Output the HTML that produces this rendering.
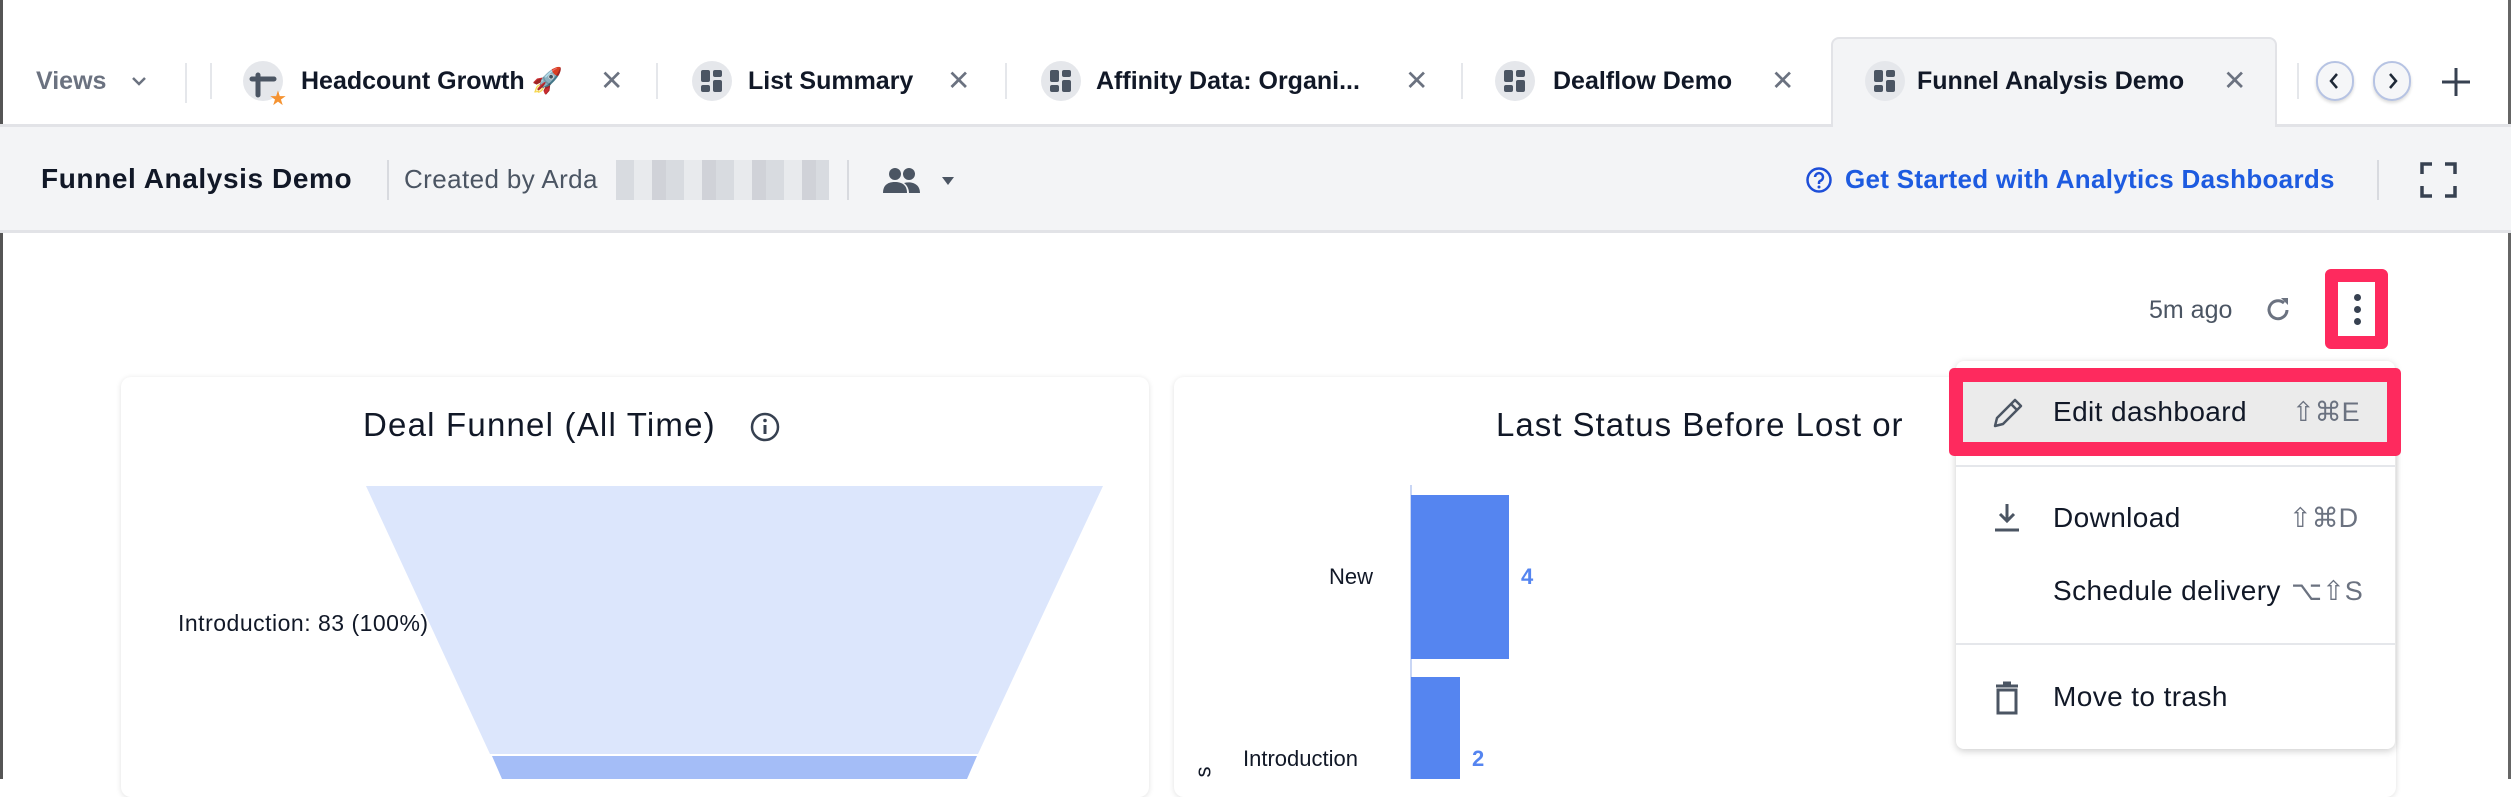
<!DOCTYPE html>
<html><head><meta charset="utf-8"><style>
*{margin:0;padding:0;box-sizing:border-box}
body{width:2511px;height:779px;overflow:hidden;background:#fff;font-family:"Liberation Sans",sans-serif;position:relative;color:#111827}
.a{position:absolute;white-space:nowrap}
.tab{font-size:25px;font-weight:bold;color:#111827;top:64px;line-height:34px}
.ic{position:absolute;top:61px;width:40px;height:40px;border-radius:20px;background:#e5e7eb}
.x{position:absolute;top:64px;font-size:28px;color:#6b7280;line-height:34px}
.sep{position:absolute;width:2px;background:#e5e7eb}
.mi{font-size:28px;color:#111827;line-height:34px;letter-spacing:.4px}
.sc{font-size:27px;color:#6b7280;line-height:34px}
</style></head><body>
<div class="a" style="left:0;top:0;width:3px;height:779px;background:#555"></div>
<div class="a" style="right:0;top:0;width:3px;height:779px;background:#666"></div>
<!-- tab bar -->
<div class="a" style="left:0;top:124px;width:2511px;height:3px;background:#e2e3e7"></div>
<div class="a tab" style="left:36px;color:#6b7280;font-weight:bold">Views</div>
<svg class="a" style="left:130px;top:74px" width="18" height="14" viewBox="0 0 18 14"><path d="M3 4l6 6 6-6" stroke="#6b7280" stroke-width="2.5" fill="none"/></svg>
<div class="sep" style="left:185px;top:63px;height:40px"></div>
<div class="sep" style="left:210px;top:63px;height:36px"></div>
<div class="ic" style="left:243px"></div>
<svg class="a" style="left:249px;top:68px" width="30" height="30" viewBox="0 0 30 30"><path d="M3 11h22M9 7v20" stroke="#4b5563" stroke-width="5" stroke-linecap="round"/></svg>
<div class="a" style="left:269px;top:86px;font-size:20px;color:#f59331">★</div>
<div class="a tab" style="left:301px">Headcount Growth 🚀</div>
<div class="x" style="left:600px">✕</div>
<div class="sep" style="left:656px;top:63px;height:36px"></div>
<div class="ic" style="left:692px"></div>
<svg class="a" style="left:700px;top:69px" width="24" height="24" viewBox="0 0 24 24"><rect x="1" y="1" width="9" height="12" rx="2" fill="#4b5563"/><rect x="13" y="1" width="9" height="7" rx="2" fill="#4b5563"/><rect x="1" y="16" width="9" height="7" rx="2" fill="#4b5563"/><rect x="13" y="11" width="9" height="12" rx="2" fill="#4b5563"/></svg>
<div class="a tab" style="left:748px">List Summary</div>
<div class="x" style="left:947px">✕</div>
<div class="sep" style="left:1005px;top:63px;height:36px"></div>
<div class="ic" style="left:1041px"></div>
<svg class="a" style="left:1049px;top:69px" width="24" height="24" viewBox="0 0 24 24"><rect x="1" y="1" width="9" height="12" rx="2" fill="#4b5563"/><rect x="13" y="1" width="9" height="7" rx="2" fill="#4b5563"/><rect x="1" y="16" width="9" height="7" rx="2" fill="#4b5563"/><rect x="13" y="11" width="9" height="12" rx="2" fill="#4b5563"/></svg>
<div class="a tab" style="left:1096px">Affinity Data: Organi...</div>
<div class="x" style="left:1405px">✕</div>
<div class="sep" style="left:1461px;top:63px;height:36px"></div>
<div class="ic" style="left:1495px"></div>
<svg class="a" style="left:1503px;top:69px" width="24" height="24" viewBox="0 0 24 24"><rect x="1" y="1" width="9" height="12" rx="2" fill="#4b5563"/><rect x="13" y="1" width="9" height="7" rx="2" fill="#4b5563"/><rect x="1" y="16" width="9" height="7" rx="2" fill="#4b5563"/><rect x="13" y="11" width="9" height="12" rx="2" fill="#4b5563"/></svg>
<div class="a tab" style="left:1553px">Dealflow Demo</div>
<div class="x" style="left:1771px">✕</div>
<div class="a" style="left:1831px;top:37px;width:446px;height:91px;background:#f3f4f6;border:2px solid #e2e3e7;border-bottom:none;border-radius:8px 8px 0 0"></div>
<div class="ic" style="left:1865px"></div>
<svg class="a" style="left:1873px;top:69px" width="24" height="24" viewBox="0 0 24 24"><rect x="1" y="1" width="9" height="12" rx="2" fill="#4b5563"/><rect x="13" y="1" width="9" height="7" rx="2" fill="#4b5563"/><rect x="1" y="16" width="9" height="7" rx="2" fill="#4b5563"/><rect x="13" y="11" width="9" height="12" rx="2" fill="#4b5563"/></svg>
<div class="a tab" style="left:1917px">Funnel Analysis Demo</div>
<div class="x" style="left:2223px">✕</div>
<div class="sep" style="left:2297px;top:63px;height:36px"></div>
<div class="a" style="left:2316px;top:61px;width:38px;height:40px;border-radius:20px;border:2px solid #b6c3e3;background:#f5f6f8;box-shadow:0 2px 3px rgba(0,0,0,.15)"></div>
<svg class="a" style="left:2326px;top:71px" width="18" height="20" viewBox="0 0 18 20"><path d="M11 3l-6 7 6 7" stroke="#1f2937" stroke-width="2.5" fill="none"/></svg>
<div class="a" style="left:2373px;top:61px;width:38px;height:40px;border-radius:20px;border:2px solid #b6c3e3;background:#f5f6f8;box-shadow:0 2px 3px rgba(0,0,0,.15)"></div>
<svg class="a" style="left:2383px;top:71px" width="18" height="20" viewBox="0 0 18 20"><path d="M7 3l6 7-6 7" stroke="#1f2937" stroke-width="2.5" fill="none"/></svg>
<svg class="a" style="left:2440px;top:66px" width="32" height="32" viewBox="0 0 32 32"><path d="M16 2v28M2 16h28" stroke="#374151" stroke-width="3"/></svg>
<!-- header -->
<div class="a" style="left:0;top:127px;width:2511px;height:104px;background:#f3f4f6"></div>
<div class="a" style="left:0;top:230px;width:2511px;height:3px;background:#e2e3e7"></div>
<div class="a" style="left:41px;top:161px;font-size:28px;font-weight:bold;line-height:36px;letter-spacing:.6px">Funnel Analysis Demo</div>
<div class="sep" style="left:387px;top:160px;height:40px;background:#d8dadf"></div>
<div class="a" style="left:404px;top:162px;font-size:26px;color:#4b5563;line-height:34px;letter-spacing:.4px">Created by Arda</div>
<div class="a" style="left:616px;top:160px;width:213px;height:40px;background:repeating-linear-gradient(90deg,#d1d5db 0 18px,#e5e7eb 18px 36px,#c7cad0 36px 50px);opacity:.8"></div>
<div class="sep" style="left:847px;top:160px;height:40px;background:#d8dadf"></div>
<svg class="a" style="left:882px;top:166px" width="40" height="28" viewBox="0 0 40 28"><circle cx="13" cy="8" r="6" fill="#4b5563"/><circle cx="27" cy="8" r="6" fill="#4b5563"/><path d="M1 27c0-8 5-11 12-11s12 3 12 11z" fill="#4b5563"/><path d="M22 17c8-2 16 1 16 10h-11c0-4-2-8-5-10z" fill="#4b5563"/></svg>
<svg class="a" style="left:940px;top:175px" width="16" height="12" viewBox="0 0 16 12"><path d="M2 2h12l-6 8z" fill="#4b5563"/></svg>
<svg class="a" style="left:1805px;top:165px" width="28" height="30" viewBox="0 0 28 30"><circle cx="14" cy="15" r="11.5" stroke="#1d4ed8" stroke-width="2.5" fill="none"/><path d="M10 12a4 4 0 1 1 5 4c-1 .5-1 1-1 3" stroke="#1d4ed8" stroke-width="2.5" fill="none"/><circle cx="14" cy="22" r="1.5" fill="#1d4ed8"/></svg>
<div class="a" style="left:1845px;top:162px;font-size:26px;font-weight:bold;color:#1d5be0;line-height:34px;letter-spacing:.3px">Get Started with Analytics Dashboards</div>
<div class="sep" style="left:2377px;top:160px;height:40px;background:#d8dadf"></div>
<svg class="a" style="left:2420px;top:162px" width="37" height="36" viewBox="0 0 37 36"><path d="M2 12V2h10M25 2h10v10M35 24v10H25M12 34H2V24" stroke="#374151" stroke-width="3.5" fill="none"/></svg>
<!-- toolbar -->
<div class="a" style="left:2149px;top:293px;font-size:25px;color:#4b5563;line-height:34px">5m ago</div>
<svg class="a" style="left:2262px;top:294px" width="32" height="32" viewBox="0 0 32 32"><path d="M25 16a9 9 0 1 1-3-7" stroke="#6b7280" stroke-width="3" fill="none"/><path d="M19 4h7v7z" fill="#6b7280"/></svg>
<div class="a" style="left:2325px;top:269px;width:63px;height:80px;border:13px solid #fe2a5e;border-radius:6px;background:#fff"></div>
<div class="a" style="left:2354px;top:294px;width:7px;height:7px;border-radius:4px;background:#374151"></div>
<div class="a" style="left:2354px;top:306px;width:7px;height:7px;border-radius:4px;background:#374151"></div>
<div class="a" style="left:2354px;top:318px;width:7px;height:7px;border-radius:4px;background:#374151"></div>
<!-- cards -->
<div class="a" style="left:121px;top:377px;width:1028px;height:420px;background:#fff;border-radius:10px;box-shadow:0 1px 6px rgba(0,0,0,.12)"></div>
<div class="a" style="left:1174px;top:377px;width:1222px;height:420px;background:#fff;border-radius:10px;box-shadow:0 1px 6px rgba(0,0,0,.12)"></div>
<div class="a" style="left:363px;top:404px;font-size:33px;color:#111827;line-height:42px;letter-spacing:1.2px">Deal Funnel (All Time)</div>
<svg class="a" style="left:749px;top:411px" width="32" height="32" viewBox="0 0 32 32"><circle cx="16" cy="16" r="13" stroke="#374151" stroke-width="2.5" fill="none"/><path d="M16 14v9" stroke="#374151" stroke-width="3"/><circle cx="16" cy="9.5" r="1.8" fill="#374151"/></svg>
<svg class="a" style="left:0;top:0" width="2511" height="779"><path d="M366,486 L1103,486 Q1040,620 978,754 L490,754 Q428,620 366,486z" fill="#dce6fc"/><polygon points="492,756 977,756 967,779 502,779" fill="#a4bdf7"/>
<line x1="1411" y1="485" x2="1411" y2="779" stroke="#c9d6f5" stroke-width="2"/>
<rect x="1411" y="495" width="98" height="164" fill="#5585f0"/><rect x="1411" y="677" width="49" height="102" fill="#5585f0"/></svg>
<div class="a" style="left:178px;top:609px;font-size:23px;color:#111827;line-height:28px;letter-spacing:.5px">Introduction: 83 (100%)</div>
<div class="a" style="left:1496px;top:404px;font-size:33px;color:#111827;line-height:42px;letter-spacing:1px">Last Status Before Lost or</div>
<div class="a" style="left:1329px;top:562px;font-size:22px;line-height:30px">New</div>
<div class="a" style="left:1521px;top:562px;font-size:22px;font-weight:bold;color:#5585f0;line-height:30px">4</div>
<div class="a" style="left:1243px;top:744px;font-size:22px;line-height:30px">Introduction</div>
<div class="a" style="left:1472px;top:744px;font-size:22px;font-weight:bold;color:#5585f0;line-height:30px">2</div>
<div class="a" style="left:1198px;top:760px;font-size:22px;line-height:24px;transform:rotate(-90deg)">s</div>
<!-- menu -->
<div class="a" style="left:1956px;top:361px;width:439px;height:388px;background:#fff;border-radius:8px;box-shadow:0 2px 8px rgba(0,0,0,.2)"></div>
<div class="a" style="left:1956px;top:465px;width:439px;height:2px;background:#e5e7eb"></div>
<div class="a" style="left:1956px;top:643px;width:439px;height:2px;background:#e5e7eb"></div>
<div class="a" style="left:1949px;top:368px;width:452px;height:88px;border:14px solid #fe2a5e;border-radius:5px;background:#ebebeb"></div>
<svg class="a" style="left:1991px;top:396px" width="34" height="34" viewBox="0 0 34 34"><path d="M4 30l2-8L24 4l6 6-18 18z" stroke="#4b5563" stroke-width="2.5" fill="none" stroke-linejoin="round"/><path d="M20 8l6 6" stroke="#4b5563" stroke-width="2.5"/></svg>
<div class="a mi" style="left:2053px;top:395px">Edit dashboard</div>
<div class="a sc" style="left:2292px;top:395px">⇧⌘E</div>
<svg class="a" style="left:1994px;top:502px" width="26" height="32" viewBox="0 0 26 32"><path d="M13 2v16M6 12l7 7 7-7" stroke="#4b5563" stroke-width="3" fill="none"/><path d="M1 28h24" stroke="#4b5563" stroke-width="3"/></svg>
<div class="a mi" style="left:2053px;top:501px">Download</div>
<div class="a sc" style="left:2289px;top:501px">⇧⌘D</div>
<div class="a mi" style="left:2053px;top:574px">Schedule delivery</div>
<div class="a sc" style="left:2291px;top:574px">⌥⇧S</div>
<svg class="a" style="left:1994px;top:681px" width="26" height="34" viewBox="0 0 26 34"><path d="M2 5h22M9 2h8" stroke="#4b5563" stroke-width="3"/><rect x="4" y="9" width="18" height="23" stroke="#4b5563" stroke-width="3" fill="none"/></svg>
<div class="a mi" style="left:2053px;top:680px">Move to trash</div>
</body></html>
